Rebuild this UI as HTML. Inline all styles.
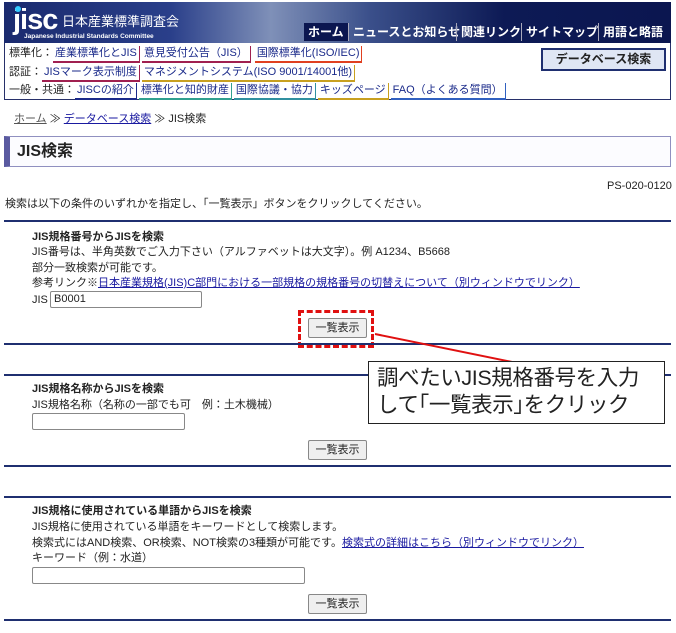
<!DOCTYPE html>
<html><head><meta charset="utf-8"><style>
*{margin:0;padding:0;box-sizing:border-box}
body{width:676px;height:633px;background:#fff;position:relative;overflow:hidden;font-family:"Liberation Sans","Noto Sans CJK JP",sans-serif;font-size:11px;color:#222}
.a{position:absolute;white-space:nowrap;line-height:14px}
.hdr{position:absolute;left:4px;top:2px;width:667px;height:41px;background:linear-gradient(90deg,#1a2a6e 0%,#2a3f8a 25%,#7f90b8 40%,#3a4f8a 55%,#0d1a55 75%,#0b1650 100%)}
.nav{position:absolute;left:4px;top:43px;width:667px;height:57px;border:1px solid #27306a;border-top:none}
.tl{position:absolute;top:23px;height:18px;line-height:18px;color:#fff;font-weight:bold;font-size:12px;padding:0 4px;border-left:1px solid #aab}
.lk{color:#1a2a8a;text-decoration:none;padding:0 2px;display:inline-block;height:17px;line-height:15px}
.hr{position:absolute;left:4px;width:667px;height:2px;background:#1f2f70}
.btn{position:absolute;width:59px;height:20px;border:1px solid #888;border-radius:2px;background:#efefef;font-size:11px;text-align:center;line-height:18px}
.inp{position:absolute;height:17px;border:1px solid #888;border-radius:2px;background:#fff;font-size:11px;padding-left:3px;line-height:15px}
u{color:#1a1aa0}
</style></head><body>
<div class="hdr"></div>
<div class="a" style="left:13px;top:5px;font-size:29px;line-height:30px;color:#fff;font-weight:bold;letter-spacing:-1px">jisc</div>
<div class="a" style="left:15px;top:6px;width:6px;height:6px;border-radius:3px;background:#3cf"></div>
<div class="a" style="left:62px;top:15px;font-size:13px;color:#fff">日本産業標準調査会</div>
<div class="a" style="left:24px;top:33px;font-size:6.5px;line-height:8px;color:#fff;font-weight:bold">Japanese Industrial Standards Committee</div>
<div class="tl" style="left:304px;border-left:none;background:#0b1650">ホーム</div>
<div class="tl" style="left:348px">ニュースとお知らせ</div>
<div class="tl" style="left:456px">関連リンク</div>
<div class="tl" style="left:521px">サイトマップ</div>
<div class="tl" style="left:598px">用語と略語</div>
<div class="nav"></div>
<div class="a" style="left:9px;top:45px;line-height:17px">標準化：<span class="lk" style="border-bottom:2px solid #a02050;border-right:1px solid #a02050">産業標準化とJIS</span><span class="lk" style="border-bottom:2px solid #a02050;border-right:1px solid #a02050;margin-left:2px">意見受付公告（JIS）</span><span class="lk" style="border-bottom:2px solid #e04020;border-right:1px solid #e04020;margin-left:4px">国際標準化(ISO/IEC)</span></div>
<div class="a" style="left:9px;top:64px;line-height:17px">認証：<span class="lk" style="border-bottom:2px solid #a02050;border-right:1px solid #a02050">JISマーク表示制度</span><span class="lk" style="border-bottom:2px solid #c8a020;border-right:1px solid #c8a020;margin-left:2px">マネジメントシステム(ISO 9001/14001他)</span></div>
<div class="a" style="left:9px;top:82px;line-height:17px">一般・共通：<span class="lk" style="border-bottom:2px solid #1a2a8a;border-right:1px solid #1a2a8a">JISCの紹介</span><span class="lk" style="border-bottom:2px solid #30a090;border-right:1px solid #30a090;margin-left:2px">標準化と知的財産</span><span class="lk" style="border-bottom:2px solid #3090a0;border-right:1px solid #3090a0;margin-left:2px">国際協議・協力</span><span class="lk" style="border-bottom:2px solid #c8a020;border-right:1px solid #c8a020;margin-left:2px">キッズページ</span><span class="lk" style="border-bottom:2px solid #3060c0;border-right:1px solid #3060c0;margin-left:2px">FAQ（よくある質問）</span></div>
<div class="a" style="left:541px;top:48px;width:125px;height:23px;border:2px solid #1f2f70;background:#dfe6f4;font-weight:bold;font-size:12px;text-align:center;line-height:19px">データベース検索</div>
<div class="a" style="left:14px;top:112px"><u style="color:#555">ホーム</u> ≫ <u>データベース検索</u> ≫ JIS検索</div>
<div class="a" style="left:4px;top:136px;width:667px;height:31px;border:1px solid #9090c0;border-left:6px solid #5a5aa0;background:#fcfcff"></div>
<div class="a" style="left:17px;top:141px;font-size:16px;line-height:22px;font-weight:bold">JIS検索</div>
<div class="a" style="left:607px;top:179px">PS-020-0120</div>
<div class="a" style="left:5px;top:197px">検索は以下の条件のいずれかを指定し、「一覧表示」ボタンをクリックしてください。</div>
<div class="hr" style="top:220px"></div>
<div class="a" style="left:32px;top:230px;font-weight:bold">JIS規格番号からJISを検索</div>
<div class="a" style="left:32px;top:245px">JIS番号は、半角英数でご入力下さい（アルファベットは大文字）。例 A1234、B5668</div>
<div class="a" style="left:32px;top:261px">部分一致検索が可能です。</div>
<div class="a" style="left:32px;top:276px">参考リンク※<u>日本産業規格(JIS)C部門における一部規格の規格番号の切替えについて（別ウィンドウでリンク）</u></div>
<div class="a" style="left:32px;top:293px">JIS</div>
<div class="inp" style="left:50px;top:291px;width:152px">B0001</div>
<div class="btn" style="left:308px;top:318px">一覧表示</div>
<div class="a" style="left:298px;top:310px;width:76px;height:38px;border:3px dashed #e01010"></div>
<div class="hr" style="top:343px"></div>
<div class="hr" style="top:374px"></div>
<svg class="a" style="left:0;top:0" width="676" height="633"><line x1="375" y1="334" x2="517" y2="363" stroke="#e01010" stroke-width="2"/></svg>
<div class="a" style="left:368px;top:361px;width:297px;height:63px;border:1px solid #222;background:#fff"></div>
<div class="a" style="left:377px;top:365px;font-size:21.5px;line-height:27px;letter-spacing:-0.4px">調べたいJIS規格番号を入力<br>して｢一覧表示｣をクリック</div>
<div class="a" style="left:32px;top:382px;font-weight:bold">JIS規格名称からJISを検索</div>
<div class="a" style="left:32px;top:398px">JIS規格名称（名称の一部でも可　例：土木機械）</div>
<div class="inp" style="left:32px;top:413px;width:153px"></div>
<div class="btn" style="left:308px;top:440px">一覧表示</div>
<div class="hr" style="top:465px"></div>
<div class="hr" style="top:496px"></div>
<div class="a" style="left:32px;top:504px;font-weight:bold">JIS規格に使用されている単語からJISを検索</div>
<div class="a" style="left:32px;top:520px">JIS規格に使用されている単語をキーワードとして検索します。</div>
<div class="a" style="left:32px;top:536px">検索式にはAND検索、OR検索、NOT検索の3種類が可能です。<u>検索式の詳細はこちら（別ウィンドウでリンク）</u></div>
<div class="a" style="left:32px;top:551px">キーワード（例：水道）</div>
<div class="inp" style="left:32px;top:567px;width:273px"></div>
<div class="btn" style="left:308px;top:594px">一覧表示</div>
<div class="hr" style="top:619px"></div>
</body></html>
